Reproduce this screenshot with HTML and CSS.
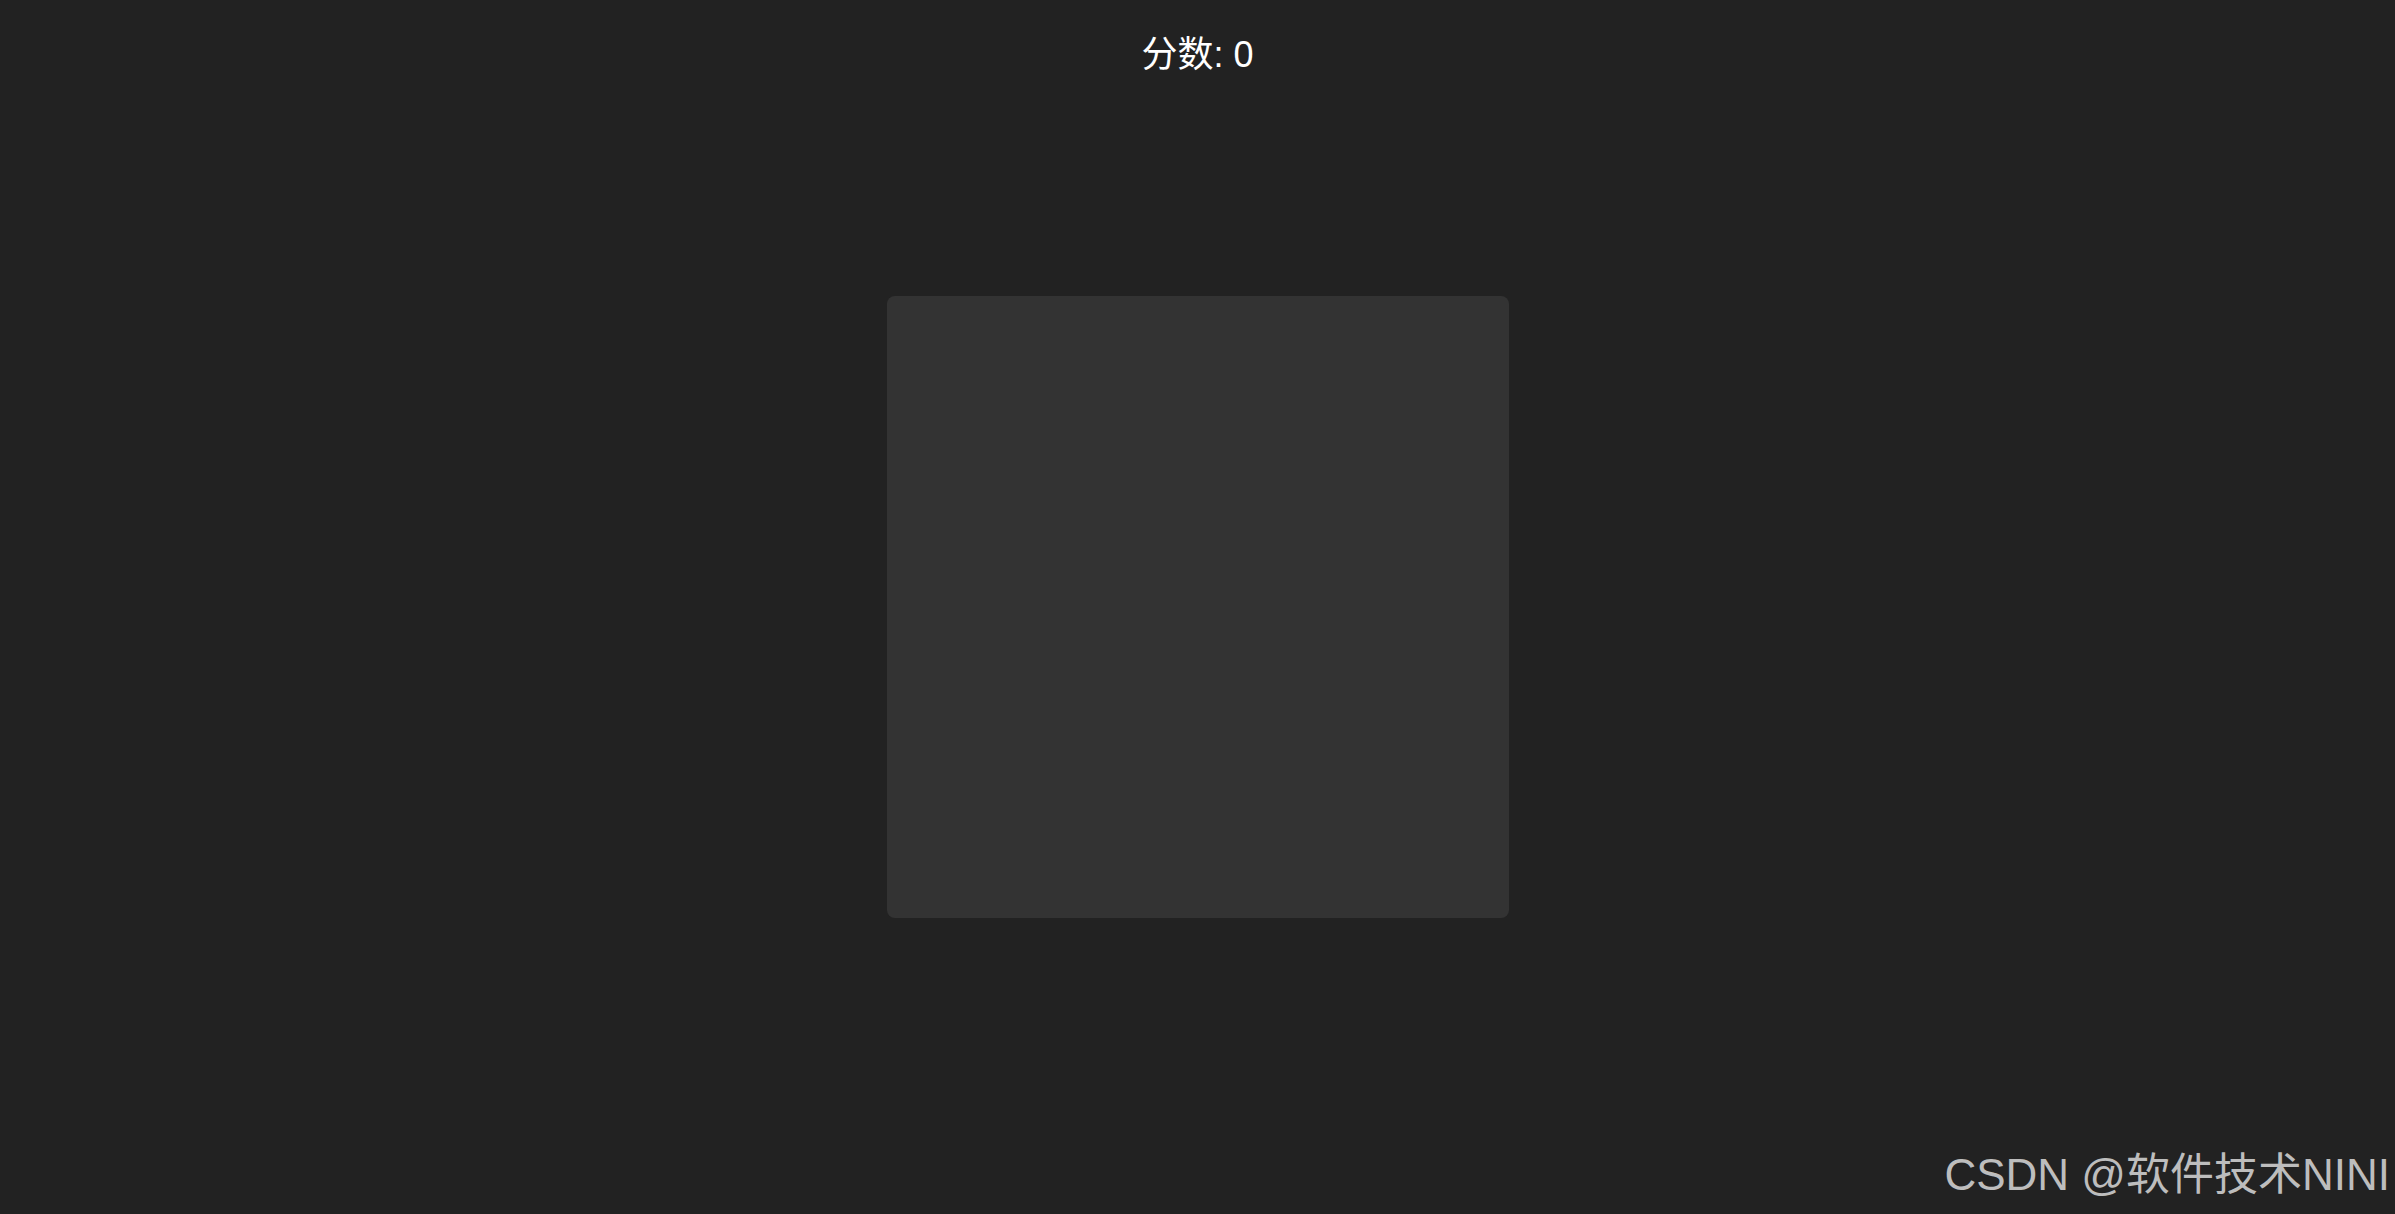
FILE: index.html
```html
<!DOCTYPE html>
<html lang="zh">
<head>
<meta charset="utf-8">
<title>分数</title>
<link rel="stylesheet" href="styles.css">
</head>
<body>
<div class="page">
  <div class="score">分数: <span class="score-value">0</span></div>
  <div class="board"></div>
  <div class="watermark">CSDN @软件技术NINI</div>
</div>
</body>
</html>
```
FILE: styles.css
```css
html, body {
  margin: 0;
  padding: 0;
  height: 100%;
  background: #222222;
}
.page {
  height: 100vh;
  display: grid;
  grid-template-rows: 1fr auto 1fr;
  justify-items: center;
}
.score {
  align-self: start;
  margin-top: 33px;
  font-family: "Liberation Sans", "Noto Sans CJK SC", sans-serif;
  font-size: 36px;
  line-height: 1.2;
  color: #ffffff;
}
.board {
  width: 622px;
  height: 622px;
  background: #333333;
  border-radius: 8px;
}
.watermark {
  align-self: end;
  justify-self: end;
  margin: 0 5px 12px 0;
  font-family: "Liberation Sans", "Noto Sans CJK SC", sans-serif;
  font-size: 44px;
  line-height: 1.2;
  color: #bdbdbd;
}
```
